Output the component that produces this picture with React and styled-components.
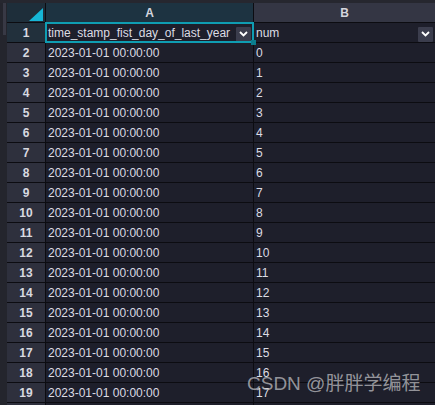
import React from 'react'
import styled, { createGlobalStyle } from 'styled-components'

const Global = createGlobalStyle`
  html, body { margin: 0; padding: 0; background: #1e1f2b; }
  body { font-family: "Liberation Sans", Arial, sans-serif; overflow: hidden; }
`

const Window = styled.div`
  position: relative;
  width: 435px;
  height: 405px;
  overflow: hidden;
  background: #26272f;
  display: flex;
  flex-direction: column;
`

const TopStrip = styled.div`
  height: 3px;
  flex-shrink: 0;
  background: #26272f;
`

const Body = styled.div`
  display: flex;
  flex: 1;
  min-height: 0;
`

const Gutter = styled.div`
  width: 7px;
  flex-shrink: 0;
  background: #24252d;
  padding-left: 3px;
  box-sizing: border-box;
`

const Thumb = styled.div`
  width: 3px;
  height: 32px;
  background: #383945;
`

const Sheet = styled.div`
  flex: 1;
  display: grid;
  grid-template-columns: 38px 207px 1fr;
  grid-auto-rows: 19px;
  gap: 1px;
  background: #0c0c11;
  align-content: start;
`

const ColHead = styled.div`
  background: ${p => (p.$active ? '#1d3341' : '#343644')};
  color: #d4d5dd;
  font-weight: bold;
  font-size: 12px;
  display: flex;
  align-items: center;
  justify-content: center;
`

const Corner = styled.div`
  background: #1e2e3a;
  position: relative;
`

const RowHead = styled.div`
  background: ${p => (p.$active ? '#22303c' : '#2e303d')};
  color: #d8d9e0;
  font-weight: bold;
  font-size: 12px;
  display: flex;
  align-items: center;
  justify-content: center;
`

const Cell = styled.div`
  position: relative;
  background: #1e1f2b;
  color: #dcdce4;
  font-size: 12px;
  display: flex;
  align-items: center;
  padding-left: 2px;
  padding-right: 2px;
  white-space: nowrap;
  overflow: ${p => (p.$selected ? 'visible' : 'hidden')};
  outline: ${p => (p.$selected ? '2px solid #0f9db2' : 'none')};
  outline-offset: -1px;
  z-index: ${p => (p.$selected ? 2 : 0)};
`

const Label = styled.span`
  flex: 1;
`

const Filter = styled.div`
  width: 15px;
  height: 15px;
  background: #3b3d4d;
  display: flex;
  align-items: center;
  justify-content: center;
  margin-top: 3px;
  border-radius: 1px;
`

const Handle = styled.div`
  position: absolute;
  right: -3px;
  bottom: -3px;
  width: 5px;
  height: 5px;
  background: #0b7d8e;
`

const Watermark = styled.div`
  position: absolute;
  left: 247px;
  top: 373px;
  font-family: "Liberation Sans", "Noto Sans CJK SC", sans-serif;
  font-size: 19px;
  line-height: 22px;
  color: rgba(180, 180, 185, 0.8);
  white-space: nowrap;
  pointer-events: none;
`

const Chevron = () => (
  <svg width="9" height="6" viewBox="0 0 9 6">
    <path d="M1 1 L4.5 4.5 L8 1" fill="none" stroke="#ffffff" strokeWidth="1.8" />
  </svg>
)

const Triangle = () => (
  <svg width="38" height="19" viewBox="0 0 38 19" style={{ display: 'block' }}>
    <polygon points="22,18 36,18 36,5" fill="#16b6d6" />
  </svg>
)

export default function App() {
  const rows = Array.from({ length: 19 }, (_, i) => i)
  return (
    <>
      <Global />
      <Window>
        <TopStrip />
        <Body>
          <Gutter>
            <Thumb />
          </Gutter>
          <Sheet>
            <Corner>
              <Triangle />
            </Corner>
            <ColHead $active>A</ColHead>
            <ColHead>B</ColHead>

            <RowHead $active>1</RowHead>
            <Cell $selected>
              <Label>time_stamp_fist_day_of_last_year</Label>
              <Filter><Chevron /></Filter>
              <Handle />
            </Cell>
            <Cell>
              <Label>num</Label>
              <Filter><Chevron /></Filter>
            </Cell>

            {rows.map(i => (
              <React.Fragment key={i}>
                <RowHead>{i + 2}</RowHead>
                <Cell>2023-01-01 00:00:00</Cell>
                <Cell>{i}</Cell>
              </React.Fragment>
            ))}
          </Sheet>
        </Body>
        <Watermark>CSDN @胖胖学编程</Watermark>
      </Window>
    </>
  )
}
